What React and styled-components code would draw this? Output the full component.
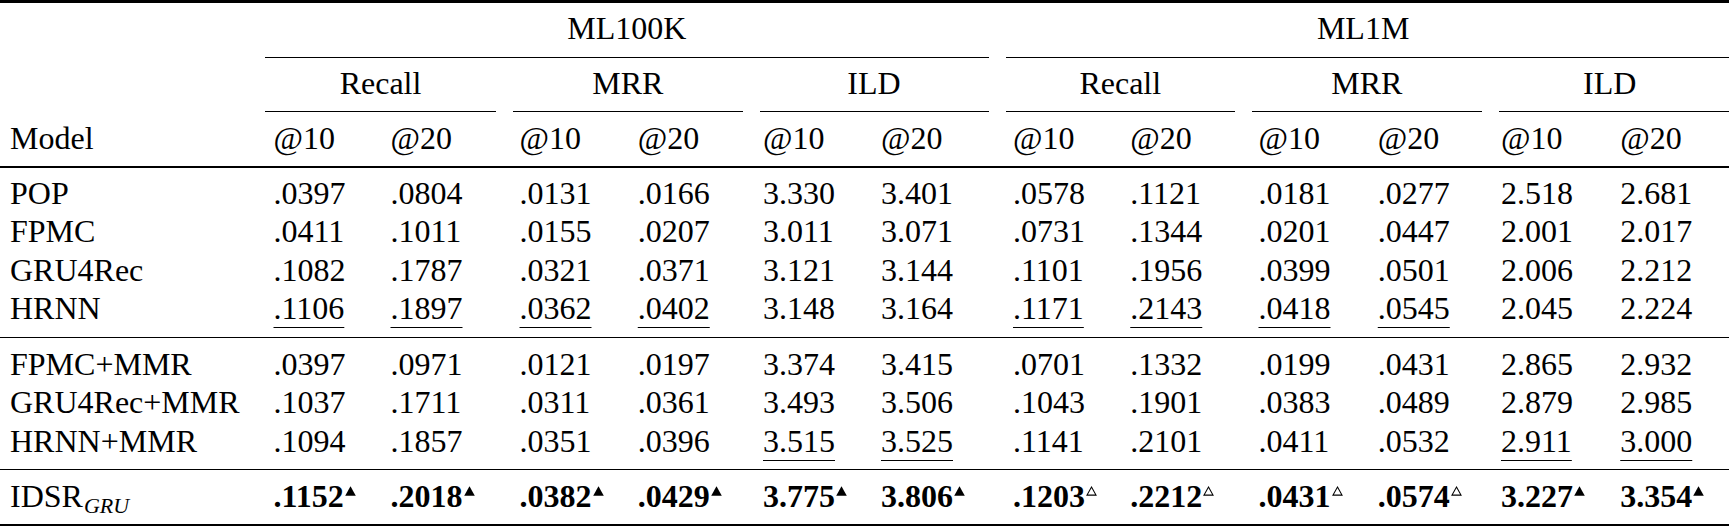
import styled, { createGlobalStyle } from 'styled-components'

const SERIF = `"Liberation Serif", "Times New Roman", serif`

const GlobalStyle = createGlobalStyle`
  body {
    margin: 0;
    background: #fff;
    font-family: ${SERIF};
  }
`

const COLS =
  '256.5px 124px 124px 123.25px 123.25px 123px 123px 123.25px 123.25px 123.25px 123.25px 123.25px 116px'

const Table = styled.div`
  width: 1729px;
  font-family: ${SERIF};
  font-size: 32px;
  color: #000;
`

const Row = styled.div`
  display: grid;
  grid-template-columns: ${COLS};
  height: 38.5px;
  line-height: 32px;
  white-space: nowrap;
`

const Cell = styled.div`
  grid-column: span ${({ $span }) => $span || 1};
  font-family: ${SERIF};
  font-size: 32px;
  font-weight: ${({ $bold }) => ($bold ? 700 : 400)};
  text-align: ${({ $center }) => ($center ? 'center' : 'left')};
  padding-left: ${({ $pad }) => $pad || 0}px;
`

const HeavyRule = styled.div`
  height: ${({ $h }) => $h}px;
  background: #000;
  margin-top: ${({ $top }) => $top || 0}px;
  margin-bottom: ${({ $bottom }) => $bottom || 0}px;
`

const MidRule = styled.div`
  height: 1.6px;
  background: #000;
  margin: 5.8px 0 9.3px;
`

const CmidRow = styled.div`
  display: grid;
  grid-template-columns: ${COLS};
  margin: 5.8px 0 9.3px;
  height: 1.1px;
`

const CmidSeg = styled.div`
  grid-column: ${({ $from, $span }) => `${$from} / span ${$span}`};
  margin-left: 8.5px;
  margin-right: ${({ $last }) => ($last ? 0 : 8.5)}px;
  background: #000;
`

const Under = styled.span`
  font-family: ${SERIF};
  text-decoration: underline;
  text-decoration-thickness: 1.3px;
  text-underline-offset: 8px;
`

const Sub = styled.sub`
  font-family: ${SERIF};
  font-style: italic;
  font-size: 22px;
  line-height: 0;
  vertical-align: -6px;
  margin-left: 1px;
`

const MarkSvg = styled.svg`
  display: inline-block;
  width: 11px;
  height: 10px;
  margin-left: 1px;
  vertical-align: 11px;
`

const Mark = ({ filled }) => (
  <MarkSvg viewBox="0 0 11 10">
    {filled ? (
      <polygon points="5.5,0.3 10.8,9.7 0.2,9.7" fill="#000" />
    ) : (
      <polygon points="5.5,1.1 10,9.1 1,9.1" fill="none" stroke="#000" strokeWidth="1.1" />
    )}
  </MarkSvg>
)

// left offset of the text inside each metric column
const PADS = [17, 10, 15, 10, 12, 7, 16, 10, 15, 11, 11, 7]

const groups = ['Recall', 'MRR', 'ILD', 'Recall', 'MRR', 'ILD']

const blockA = [
  ['POP', '.0397', '.0804', '.0131', '.0166', '3.330', '3.401', '.0578', '.1121', '.0181', '.0277', '2.518', '2.681'],
  ['FPMC', '.0411', '.1011', '.0155', '.0207', '3.011', '3.071', '.0731', '.1344', '.0201', '.0447', '2.001', '2.017'],
  ['GRU4Rec', '.1082', '.1787', '.0321', '.0371', '3.121', '3.144', '.1101', '.1956', '.0399', '.0501', '2.006', '2.212'],
  ['HRNN', '_.1106', '_.1897', '_.0362', '_.0402', '3.148', '3.164', '_.1171', '_.2143', '_.0418', '_.0545', '2.045', '2.224'],
]

const blockB = [
  ['FPMC+MMR', '.0397', '.0971', '.0121', '.0197', '3.374', '3.415', '.0701', '.1332', '.0199', '.0431', '2.865', '2.932'],
  ['GRU4Rec+MMR', '.1037', '.1711', '.0311', '.0361', '3.493', '3.506', '.1043', '.1901', '.0383', '.0489', '2.879', '2.985'],
  ['HRNN+MMR', '.1094', '.1857', '.0351', '.0396', '_3.515', '_3.525', '.1141', '.2101', '.0411', '.0532', '_2.911', '_3.000'],
]

// value, filled triangle?
const ours = [
  ['.1152', true], ['.2018', true], ['.0382', true], ['.0429', true], ['3.775', true], ['3.806', true],
  ['.1203', false], ['.2212', false], ['.0431', false], ['.0574', false], ['3.227', true], ['3.354', true],
]

const Value = ({ v }) => (v.startsWith('_') ? <Under>{v.slice(1)}</Under> : v)

const DataRow = ({ row }) => (
  <Row>
    <Cell $pad={10}>{row[0]}</Cell>
    {row.slice(1).map((v, i) => (
      <Cell key={i} $pad={PADS[i]}>
        <Value v={v} />
      </Cell>
    ))}
  </Row>
)

export default function App() {
  return (
    <>
      <GlobalStyle />
      <Table>
        <HeavyRule $h={3} $bottom={9.3} />
        <Row>
          <Cell />
          <Cell $span={6} $center>ML100K</Cell>
          <Cell $span={6} $center>ML1M</Cell>
        </Row>
        <CmidRow>
          <CmidSeg $from={2} $span={6} />
          <CmidSeg $from={8} $span={6} $last />
        </CmidRow>
        <Row>
          <Cell />
          {groups.map((g, i) => (
            <Cell key={i} $span={2} $center>
              {g}
            </Cell>
          ))}
        </Row>
        <CmidRow>
          {groups.map((g, i) => (
            <CmidSeg key={i} $from={2 + i * 2} $span={2} $last={i === groups.length - 1} />
          ))}
        </CmidRow>
        <Row>
          <Cell $pad={10}>Model</Cell>
          {PADS.map((p, i) => (
            <Cell key={i} $pad={p}>
              {i % 2 ? '@20' : '@10'}
            </Cell>
          ))}
        </Row>
        <MidRule />
        {blockA.map((r) => (
          <DataRow key={r[0]} row={r} />
        ))}
        <MidRule />
        {blockB.map((r) => (
          <DataRow key={r[0]} row={r} />
        ))}
        <MidRule />
        <Row>
          <Cell $pad={10}>
            IDSR<Sub>GRU</Sub>
          </Cell>
          {ours.map(([v, filled], i) => (
            <Cell key={i} $pad={PADS[i]} $bold>
              {v}
              <Mark filled={filled} />
            </Cell>
          ))}
        </Row>
        <HeavyRule $h={2.6} $top={5.8} />
      </Table>
    </>
  )
}
